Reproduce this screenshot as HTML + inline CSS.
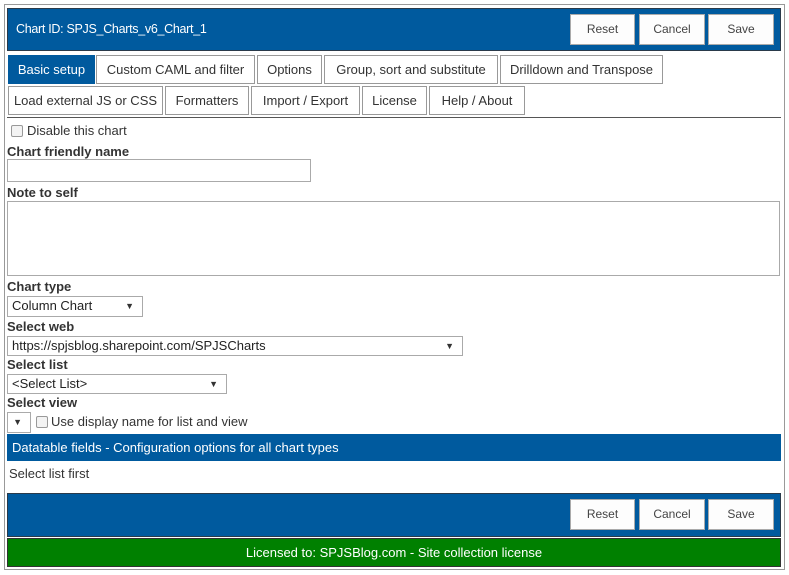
<!DOCTYPE html>
<html><head><style>
*{box-sizing:border-box;margin:0;padding:0}
body{width:789px;height:575px;background:#fff;font-family:"Liberation Sans",sans-serif;font-size:13px;color:#333;position:relative;overflow:hidden}
.a{position:absolute}
.frame{left:4px;top:4px;width:781px;height:566px;border:1px solid #999}
.blue{background:#005a9e;border:1px solid #2a3a4a}
.btn{position:absolute;background:#fdfdfd;border:1px solid #aaa;color:#444;font-size:12px;text-align:center;line-height:29px;height:31px}
.tab{position:absolute;height:29px;border:1px solid #999;background:#fff;color:#333;text-align:center;line-height:27px;font-size:13px}
.lbl{position:absolute;left:7px;font-weight:bold;font-size:13px;color:#333}
.inp{position:absolute;border:1px solid #aaa;background:#fff}
.sel{position:absolute;border:1px solid #aaa;background:#fff;font-size:13px;padding-left:4px;line-height:18px;color:#222}
.sel:after{content:"▼";position:absolute;right:8px;top:0;font-size:9px;color:#333}
.cb{position:absolute;width:12px;height:12px;border:1px solid #999;border-radius:2px;background:#f3f3f3}
</style></head><body>
<div class="a frame"></div>
<div class="a blue" style="left:7px;top:8px;width:774px;height:43px"></div>
<div class="a" style="left:16px;top:22px;color:#fff;font-size:12.5px;letter-spacing:-0.3px">Chart ID: SPJS_Charts_v6_Chart_1</div>
<div class="btn" style="left:570px;top:14px;width:65px">Reset</div>
<div class="btn" style="left:639px;top:14px;width:66px">Cancel</div>
<div class="btn" style="left:708px;top:14px;width:66px">Save</div>

<div class="tab" style="left:8px;top:55px;width:87px;background:#005a9e;color:#fff;border-color:#005a9e">Basic setup</div>
<div class="tab" style="left:96px;top:55px;width:159px">Custom CAML and filter</div>
<div class="tab" style="left:257px;top:55px;width:65px">Options</div>
<div class="tab" style="left:324px;top:55px;width:174px">Group, sort and substitute</div>
<div class="tab" style="left:500px;top:55px;width:163px">Drilldown and Transpose</div>
<div class="tab" style="left:8px;top:86px;width:155px">Load external JS or CSS</div>
<div class="tab" style="left:165px;top:86px;width:84px">Formatters</div>
<div class="tab" style="left:251px;top:86px;width:109px">Import / Export</div>
<div class="tab" style="left:362px;top:86px;width:65px">License</div>
<div class="tab" style="left:429px;top:86px;width:96px">Help / About</div>
<div class="a" style="left:7px;top:117px;width:774px;height:1px;background:#555"></div>

<div class="cb" style="left:11px;top:125px"></div>
<div class="a" style="left:27px;top:123px">Disable this chart</div>
<div class="lbl" style="top:144px">Chart friendly name</div>
<div class="inp" style="left:7px;top:159px;width:304px;height:23px"></div>
<div class="lbl" style="top:185px">Note to self</div>
<div class="inp" style="left:7px;top:201px;width:773px;height:75px"></div>
<div class="lbl" style="top:279px">Chart type</div>
<div class="sel" style="left:7px;top:296px;width:136px;height:21px">Column Chart</div>
<div class="lbl" style="top:319px">Select web</div>
<div class="sel" style="left:7px;top:336px;width:456px;height:20px">https://spjsblog.sharepoint.com/SPJSCharts</div>
<div class="lbl" style="top:357px">Select list</div>
<div class="sel" style="left:7px;top:374px;width:220px;height:20px">&lt;Select List&gt;</div>
<div class="lbl" style="top:395px">Select view</div>
<div class="sel" style="left:7px;top:412px;width:24px;height:21px"></div>
<div class="cb" style="left:36px;top:416px"></div>
<div class="a" style="left:51px;top:414px">Use display name for list and view</div>

<div class="a" style="left:7px;top:434px;width:774px;height:27px;background:#005a9e"></div>
<div class="a" style="left:12px;top:440px;color:#fff">Datatable fields - Configuration options for all chart types</div>
<div class="a" style="left:9px;top:466px">Select list first</div>

<div class="a blue" style="left:7px;top:493px;width:774px;height:44px"></div>
<div class="btn" style="left:570px;top:499px;width:65px">Reset</div>
<div class="btn" style="left:639px;top:499px;width:66px">Cancel</div>
<div class="btn" style="left:708px;top:499px;width:66px">Save</div>
<div class="a" style="left:7px;top:538px;width:774px;height:29px;background:#008000;border:1px solid #333;color:#fff;text-align:center;line-height:27px">Licensed to: SPJSBlog.com - Site collection license</div>
</body></html>
